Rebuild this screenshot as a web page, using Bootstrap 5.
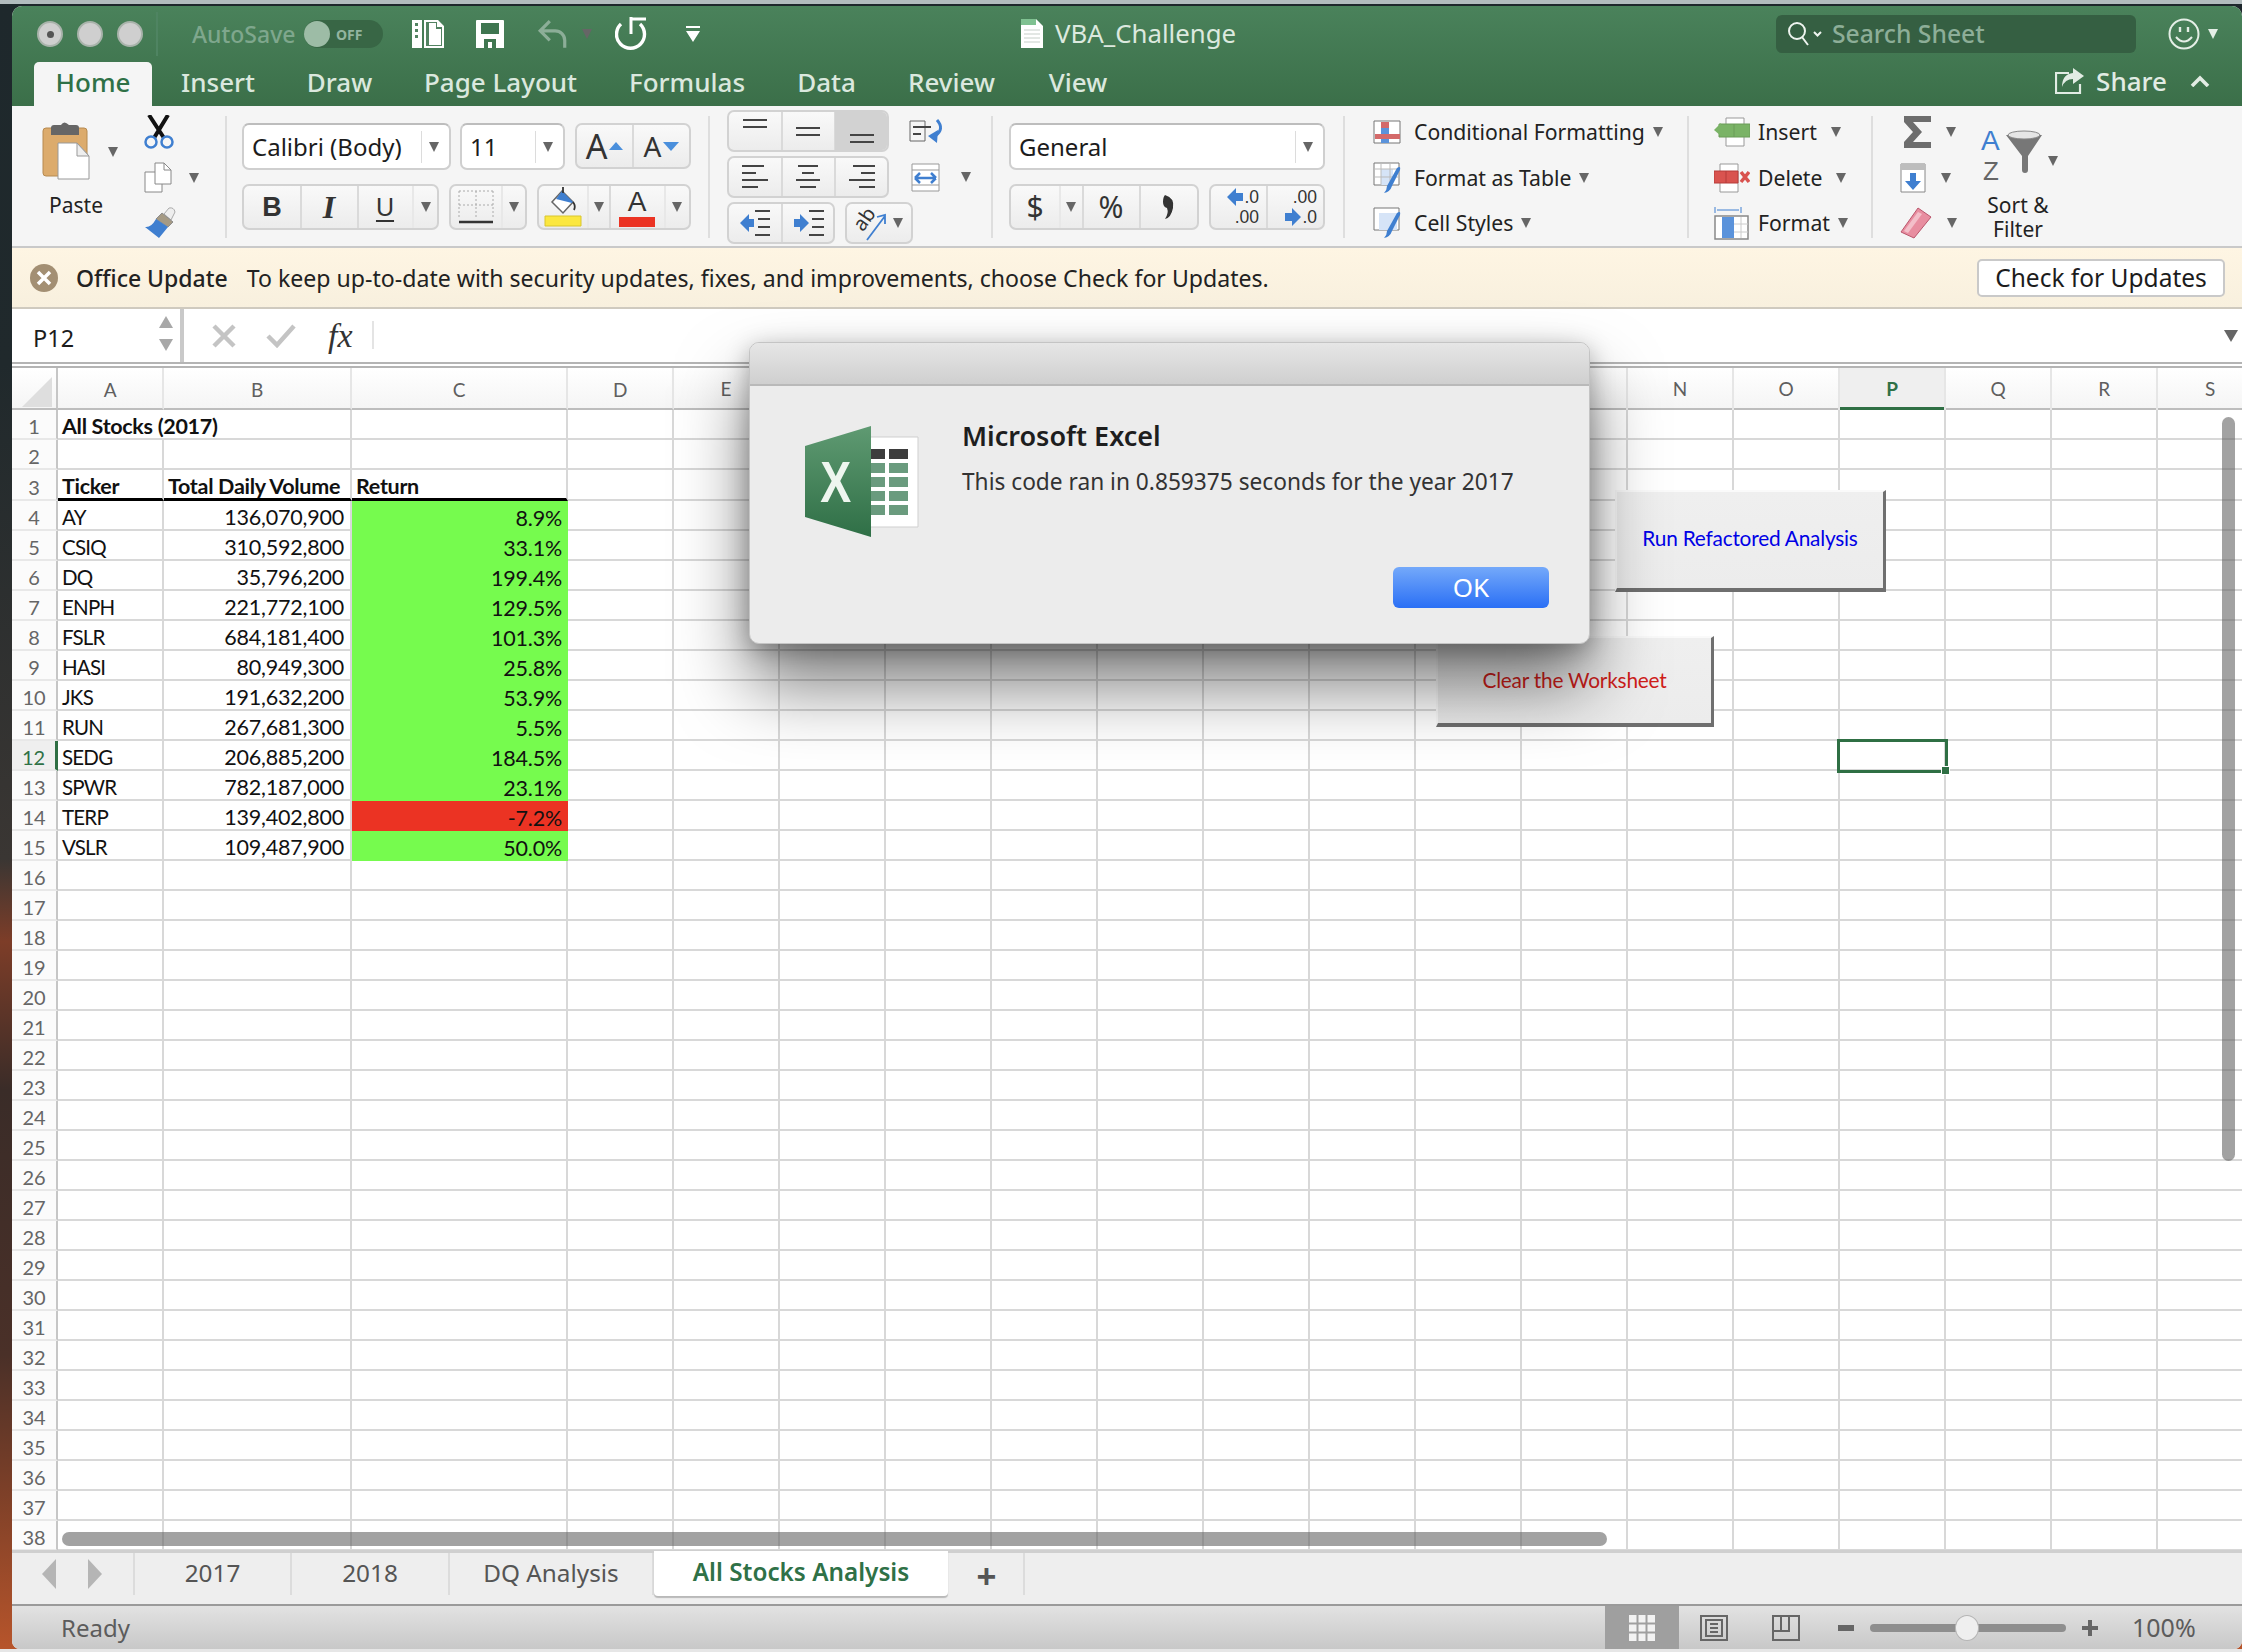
<!DOCTYPE html>
<html lang="en">
<head>
<meta charset="utf-8">
<title>VBA_Challenge</title>
<link rel="stylesheet" href="https://cdn.jsdelivr.net/npm/bootstrap@5.3.0/dist/css/bootstrap.min.css">
<style>
html,body{margin:0;height:1652px;overflow:hidden}
body{background:linear-gradient(180deg,#1e282c 0,#20292c 22%,#3a3633 52%,#7d3d28 57%,#3a2c28 66%,#4a3028 82%,#7b3f28 90%,#b8552b 100%);font-family:"Noto Sans","Liberation Sans",sans-serif;color:#222}
.strip{height:4px;background:#b2bcbe}
.xwin{position:relative;margin:2px 0 0 12px;width:2230px;height:1643px;overflow:hidden;border-radius:10px 10px 8px 8px;background:#fff;display:flex;flex-direction:column}
.bottom-strip{height:3px;background:#e6e6e6}
/* green head */
.head{height:100px;background:linear-gradient(180deg,#4a825b,#3b6f49);flex:none}
.tbar{height:56px;display:flex;align-items:center}
.left-zone{width:1009px;display:flex;align-items:center;padding-left:25px}
.lamp{width:26px;height:26px;border-radius:50%;background:#cfcfcf;border:2px solid #a9b3ab;margin-right:14px;display:flex;align-items:center;justify-content:center}
.lamp i{width:7px;height:7px;background:#555;border-radius:50%}
.tsep{width:2px;height:44px;background:#4f8462;margin:0 34px 0 -1px}
.autosave{font-size:23px;font-weight:500;color:#7fa78d;width:112px}
.tog{width:79px;height:28px;border-radius:14px;background:#386645;display:flex;align-items:center;color:#93b49f;font-size:14px;font-weight:700}
.tog i{width:26px;height:26px;border-radius:50%;background:#9dbca6;margin-right:6px}
.i1{margin-left:29px}.i2{margin-left:32px}.i3{margin-left:33px}.i4{margin-left:13px;border-top-color:#7fa58c}.i5{margin-left:23px}.i6{margin-left:39px}
.title{display:flex;align-items:center;color:#dce9df;font-size:25.8px;gap:12px;width:755px;padding-bottom:2px}
.search{width:360px;height:38px;background:#355f42;border-radius:6px;display:flex;align-items:center;color:#8dae98;font-size:24.7px;font-weight:500;padding-left:12px}
.search span{margin-left:10px}
.smile{margin-left:32px;display:flex;align-items:center;gap:8px}
.smile .cr{border-top-color:#e4eee6}
.ribtabs{height:44px;display:flex;position:relative}
.ribtabs .nav-link{padding:0;text-align:center;color:#dbe8de;font-size:26px;font-weight:500;line-height:40px;height:44px}
.ribtabs .nav-link.active{background:#f5f5f5;color:#2f7147;border-radius:5px 5px 0 0}
.ribtabs .nav-item:nth-child(1){margin-left:22px;width:118px}
.ribtabs .nav-item:nth-child(2){margin-left:3px;width:126px}
.ribtabs .nav-item:nth-child(3){width:117px}
.ribtabs .nav-item:nth-child(4){width:205px}
.ribtabs .nav-item:nth-child(5){width:168px}
.ribtabs .nav-item:nth-child(6){width:111px}
.ribtabs .nav-item:nth-child(7){width:139px}
.ribtabs .nav-item:nth-child(8){width:114px}
.sharebox{margin-left:auto;display:flex;align-items:center;color:#e2ece4;font-size:26px;font-weight:500;height:38px;padding-right:32px;gap:11px}
.sharebox svg:last-child{margin-left:12px}
/* ribbon */
.ribbon{height:140px;background:#f5f5f5;display:flex;flex:none;font-size:21.2px;color:#222}
.rsep{width:2px;height:122px;margin-top:10px;background:#dedede;flex:none}
.cr{display:inline-block;width:0;height:0;border-left:5px solid transparent;border-right:5px solid transparent;border-top:10px solid #666;flex:none}
.g-clip{width:213px;display:flex;padding-left:30px}
.paste-col{width:102px;position:relative;padding-top:14px}
.paste-col .cr{position:absolute;left:66px;top:41px}
.paste-col div{margin:10px 0 0 7px;font-size:21px;line-height:30px}
.r3{padding-top:3px;display:flex;flex-direction:column}
.r3>div{height:46px;display:flex;align-items:center}
.clip-tools .cr{margin-left:17px}
.g-font{width:481px;padding:17px 0 0 15px}
.g-num{width:350px;padding:17px 0 0 16px}
.rowa{display:flex;gap:10px;height:47px;margin-bottom:14px}
.combo{height:47px;background:#fff;border:2px solid #cfcfcf;border-top-color:#bdbdbd;border-radius:7px;display:flex;align-items:center;padding-left:8px;font-size:24px;color:#1c1c1c;position:relative}
.combo .cr{position:absolute;right:10px;top:17px}
.combo::after{content:"";position:absolute;right:27px;top:6px;height:32px;width:1px;background:#dcdcdc}
.c1{width:209px;margin-right:-1px}.c2{width:105px}.c3{width:316px}
.seg{background:linear-gradient(180deg,#f9f9f9,#ececec);border:2px solid #d2d2d2;border-radius:7px;height:46px;display:flex;overflow:hidden}
.seg .btn{padding:0;border:0;border-radius:0;border-right:2px solid #dadada;background:none;color:#333;display:flex;align-items:center;justify-content:center;flex:none;height:100%;font-size:30px;line-height:1}
.seg .btn:last-child{border-right:0}
.w-116{width:116px}.w-197{width:197px}.w-78{width:78px}.w-154{width:154px}.w-190{width:190px}
.bA{font-size:34px!important;gap:2px}
.bA2{font-size:28px!important;gap:2px}
.wg{width:57px}
.w58{width:58px}.w56{width:56px}.w25{width:25px}.w54{width:52px}.w24{width:24px}.w50{width:50px}.w51{width:51px}.w23{width:23px}
.seg .btn.soft{border-right-color:#e8e8e8}
.tri-u{width:0;height:0;border-left:7px solid transparent;border-right:7px solid transparent;border-bottom:8px solid #4a8fdc}
.tri-d{width:0;height:0;border-left:8px solid transparent;border-right:8px solid transparent;border-top:9px solid #4a8fdc}
.bold{font-weight:700;font-family:"Liberation Sans",sans-serif;font-size:27px!important}
.ital{font-style:italic;font-weight:700;font-family:"Liberation Serif",serif;font-size:32px!important}
.undl{font-family:"Liberation Sans",sans-serif;font-size:25px!important;text-decoration:underline;text-underline-offset:4px}
.tcol{flex-direction:column;gap:0;font-family:"Liberation Sans",sans-serif;font-size:28px!important}
.tcol svg{display:block;margin-top:1px}
.dec{flex-direction:column;font-family:"Liberation Sans",sans-serif;font-size:17.5px!important;line-height:20.5px!important;align-items:flex-end!important;padding-right:7px!important}
.dec span{display:flex;align-items:center;height:20.5px}
.dec svg{margin-right:1px}
.g-align{width:281px;padding:4px 0 0 17px}
.rowb{display:flex;height:42px;margin-bottom:4px;align-items:center}
.seg.alg{height:42px;width:162px}
.alg .btn{width:54px}
.alg .btn.on{background:#d2d2d2}
.alg2{width:108px!important}
.seg.orient{width:68px;height:42px;margin-left:10px;gap:4px;align-items:center;padding-left:8px}
.wrapi{margin-left:20px}.mergei{margin-left:22px}.mergei+.cr{margin-left:21px}
.g-styles{width:342px;padding-left:28px}
.g-styles svg{margin-right:13px}
.g-styles .cr{margin-left:8px}
.g-cells{width:182px;padding-left:25px}
.g-cells svg{margin-right:8px}
.g-cells .cr{margin-left:14px}
.g-cells .tight{margin-left:8px}
.g-edit{display:flex;padding-left:27px}
.edit-col{width:81px}
.edit-col .cr{margin-left:15px}
.sumi{margin-left:4px}
.sort-col{text-align:center;width:80px;padding-top:20px;font-size:21px;line-height:24px;position:relative}
.sort-col svg{display:block;margin-bottom:15px;overflow:visible}
.sort-col .cr{position:absolute;left:67px;top:50px}
.sort-lb{margin-left:-2px;width:78px}
.svis{overflow:visible}
/* notice */
.notice{height:63px;flex:none;border-top:2px solid #c9c9c9;border-bottom:2px solid #cfcabf;background:linear-gradient(180deg,#fef5e3,#f8f0de);display:flex;align-items:center;padding-left:18px;font-size:23.1px;color:#222}
.notice b{font-weight:500;margin:0 19px 0 18px;font-size:23px;padding-top:2px}
.notice span{padding-top:2px}
.notice .btn{margin-left:auto;margin-right:17px;width:248px;height:38px;padding:0;background:#fff;border:2px solid #c9c9c9;border-radius:5px;font-size:24.5px;line-height:32px;color:#1c1c1c}
/* formula */
.fbar{height:59px;flex:none;background:#fff;display:flex;border-bottom:6px double #b4b4b4;position:relative}
.namebox{width:172px;border-right:4px solid #c9c9c9;font-size:23.5px;line-height:36px;padding:11px 0 0 21px;position:relative;color:#1c1c1c}
.namebox i{position:absolute;left:147px;width:0;height:0;border-left:7px solid transparent;border-right:7px solid transparent}
.namebox .up{top:7px;border-bottom:12px solid #a8a8a8}.namebox .dn{top:30px;border-top:12px solid #a8a8a8}
.fic{display:flex;align-items:center;padding-left:28px;gap:30px;width:188px}
.fx{font-family:"Liberation Serif",serif;font-style:italic;font-size:34px;color:#333;margin-left:2px;line-height:1}
.fs2{width:2px;height:28px;background:#e4e4e4;margin:12px 0}
.fbar .cr{position:absolute;right:4px;top:21px;border-left-width:7px;border-right-width:7px;border-top-width:12px}
/* sheet */
.sheet{height:1182px;flex:none;overflow:hidden;position:relative;font-family:Lato,"Liberation Sans",sans-serif}
.grid{table-layout:fixed;border-collapse:separate;border-spacing:0;width:2252px;font-size:21.5px;color:#111;letter-spacing:-.2px}
.grid col:nth-child(1){width:46px}.grid col:nth-child(2){width:106px}.grid col:nth-child(3){width:188px}.grid col:nth-child(4){width:216px}.grid col:nth-child(5){width:106px}
.grid th,.grid td{height:30px;padding:4px 5px 0 4px;line-height:24px;border-right:2px solid #d8d8d8;border-bottom:2px solid #d8d8d8;white-space:nowrap;overflow:visible;font-weight:400}
.grid thead th{height:42px;padding:3px 0 0;text-align:center;font-size:19px;color:#5f5f5f;background:linear-gradient(180deg,#fff,#f5f5f5);border-bottom:2px solid #bdbdbd;border-right:2px solid #e6e6e6}
.grid thead .cor{border-right-color:#c6c6c6;position:relative;padding:0}
.grid thead .cor::before{content:"";position:absolute;left:10px;top:9px;border-left:30px solid transparent;border-bottom:30px solid #dedede}
.grid tbody th{text-align:center;padding:4px 0 0;color:#666;font-size:20px;background:#fbfbfb;border-right-color:#c6c6c6;border-bottom-color:#e8e8e8}
.grid .rst{padding:0;border-right:0;background:repeating-linear-gradient(90deg,transparent 0 104px,#d8d8d8 104px 106px)}
.grid thead .hrow{padding:0;background:linear-gradient(180deg,#fff,#f5f5f5);vertical-align:top}
.hletters{display:flex;height:42px;margin-bottom:-2px}
.hletters span{width:106px;flex:none;height:42px;line-height:42px;border-right:2px solid #e6e6e6}
.hletters .pk{background:#efefef;color:#2f7147;box-shadow:inset 0 -3px #2f6f44;font-weight:700}
.grid tbody th.rsel{color:#2f7147;background:#efefef;border-right:3px solid #2f6f44}
.grid tbody td:nth-child(2):not(.hd){font-size:20.5px;letter-spacing:-.8px}
.grid .hd{font-weight:700;letter-spacing:-.3px}
.grid .und{border-bottom:3px solid #000}
.grid .num{text-align:right;padding-right:6px}
.grid .g{background:#76fb4e;border-right:0;border-bottom:0}
.grid .r{background:#eb3323;border-right:0;border-bottom:0}
/* overlays */
.xsb{position:absolute;background:rgba(95,95,95,.58);border-radius:7px}
.hsb{left:50px;top:1526px;width:1545px;height:14px}
.vsb{left:2210px;top:411px;width:13px;height:744px}
.sel{position:absolute;left:1825px;top:733px;width:111px;height:34px;border:3px solid #2f6f44}
.sel::after{content:"";position:absolute;right:-5px;bottom:-5px;width:9px;height:9px;background:#2f6f44;border:1px solid #fff}
.vbtn{position:absolute;display:flex;align-items:center;justify-content:center;background:linear-gradient(180deg,#efefef,#ececec);border:0;border-top:2px solid #fafafa;border-left:2px solid #fafafa;border-right:3px solid #6f6f6f;border-bottom:4px solid #6f6f6f;font-family:Lato,sans-serif;font-size:20.8px;border-radius:0;letter-spacing:-.2px;padding:0 0 4px}
.run{left:1603px;top:484px;width:271px;height:102px;color:#0000e6}
.clr{left:1424px;top:630px;width:278px;height:91px;color:#d0201a;padding-bottom:2px}
.dlg{position:absolute;left:737px;top:336px;width:841px;height:302px;background:#ececec;border:1px solid #c4c4c4;border-radius:10px;box-shadow:0 42px 70px rgba(0,0,0,.5),0 6px 24px rgba(0,0,0,.28);overflow:hidden;display:block}
.dlg .card-header{height:43px;padding:0;background:linear-gradient(180deg,#e6e6e6,#cfcfcf);border-bottom:2px solid #b9b9b9;border-radius:0}
.dlg .card-body{position:relative;display:flex;padding:40px 0 0 55px}
.dlg-t{font-weight:600;font-size:27px;line-height:34px;color:#1e1e1e}
.dlg-m{font-size:22.7px;line-height:30px;color:#333;margin-top:14px}
.dlg-c{margin:-7px 0 0 43px}
.dlg .btn{position:absolute;left:643px;top:181px;width:156px;height:41px;padding:0;border:0;border-radius:6px;background:linear-gradient(180deg,#74a9fa,#2a6ff5);color:#fff;font-size:26px;line-height:41px}
/* sheet tabs */
.stabs{height:54px;flex:none;background:#eeeeee;border-top:3px solid #cfcfcf;display:flex;position:relative}
.stabs .arr{width:123px;border-right:2px solid #dcdcdc;display:flex;align-items:center;gap:32px;padding-left:30px;height:42px}
.stabs .nav-link{padding:0;color:#555;font-size:24.3px;line-height:40px;text-align:center;height:42px;border-right:2px solid #dcdcdc}
.stabs .nav-item:nth-child(1){width:157px}.stabs .nav-item:nth-child(2){width:158px}.stabs .nav-item:nth-child(3){width:204px}
.stabs .nav-link.active{width:294px;height:45px;background:#fff;color:#2f7147;font-weight:600;border:0;border-radius:0 0 4px 4px;box-shadow:0 2px 1px #b9b9b9;margin-top:-2px;line-height:42px}
.stabs .plus{width:77px;height:42px;border-right:2px solid #dcdcdc;font-size:34px;font-weight:700;line-height:46px;color:#555;text-align:center;font-family:"Liberation Sans",sans-serif;padding-left:2px}
/* status */
.sbar{flex:1;border-top:2px solid #9a9a9a;background:linear-gradient(180deg,#e2e2e2,#c8c8c8);display:flex;align-items:center;color:#5c5c5c;font-size:24px;padding-left:49px;position:relative}
.vw{margin-left:auto;width:74px;height:100%;background:#9f9f9f;display:flex;align-items:center;justify-content:center}
.i-p{margin-left:21px}.i-b{margin-left:44px}.i-m{margin-left:38px}
.zslide{width:196px;height:8px;margin-left:16px;border-radius:4px;background:#8e8e8e;position:relative}
.zslide i{position:absolute;left:85px;top:-9px;width:24px;height:26px;border-radius:50%;background:#efefef;border:1px solid #b5b5b5}
.i-z{margin-left:16px}.pct{margin:0 49px 0 34px;font-size:25px;width:61px;white-space:nowrap}
</style>
</head>
<body>
<div class="strip"></div>
<div class="xwin">
  <div class="head">
    <div class="tbar">
      <div class="left-zone">
        <div class="lamp"><i></i></div><div class="lamp"></div><div class="lamp"></div>
        <div class="tsep"></div>
        <div class="autosave">AutoSave</div>
        <div class="tog"><i></i>OFF</div>
        <svg class="i1" width="32" height="28" viewBox="0 0 32 28"><path fill="#fff" d="M0 0h10v28H0zM12 0h14l6 6v22H12z"/><path fill="#3f7650" d="M3 3h3v3H3zM3 9h3v3H3zM3 15h3v3H3zM14 2h11v5h5v19H14z" opacity=".9"/><path fill="#fff" d="M17 3h7v6h5v16H17z"/></svg>
        <svg class="i2" width="28" height="28" viewBox="0 0 28 28"><path fill="#fff" d="M0 1q0-1 1-1h26q1 0 1 1v27H0z"/><path fill="#3f7650" d="M5 3h18v11H5zM8 19h12v9H8z"/><path fill="#fff" d="M12 22h4v6h-4z"/></svg>
        <svg class="i3" width="32" height="32" viewBox="0 0 30 30" fill="none" stroke="#8cae98" stroke-width="3"><path d="M12 3L3 12l9 9M3 12h14a9 9 0 0 1 9 9v7"/></svg>
        <span class="cr i4"></span>
        <svg class="i5" width="32" height="36" viewBox="0 0 32 36" fill="none" stroke="#fff" stroke-width="3.400"><path d="M6 8a14 14 0 1 0 19 0"/><path d="M16 1v17M16 3h15" stroke-width="3"/></svg>
        <svg class="i6" width="14" height="18" viewBox="0 0 14 18"><path fill="#fff" d="M0 1h14v2H0zM0 6h14l-7 11z"/></svg>
      </div>
      <div class="title">
        <svg width="22" height="29" viewBox="0 0 22 29"><path fill="#fff" d="M0 0h15l7 7v22H0z"/><path fill="#7fc191" d="M0 0h15v6H0z"/><path stroke="#c6cfc9" fill="none" d="M3 11h16M3 15h16M3 19h16M3 23h16"/></svg>
        <span>VBA_Challenge</span>
      </div>
      <div class="search">
        <svg width="34" height="24" viewBox="0 0 34 24" fill="none" stroke="#eef4ef" stroke-width="2"><circle cx="9" cy="9" r="8"/><path d="M14 15l6 8M26 10l3.500 3.500L33 10"/></svg>
        <span>Search Sheet</span>
      </div>
      <div class="smile">
        <svg width="32" height="32" viewBox="0 0 32 32" fill="none" stroke="#e4eee6" stroke-width="2"><circle cx="16" cy="16" r="14.500"/><path d="M8 19q8 9 16 0"/><path d="M12 9v5M20 9v5" stroke-width="2.400"/></svg>
        <span class="cr"></span>
      </div>
    </div>
    <div class="ribtabs">
      <ul class="nav">
        <li class="nav-item"><a class="nav-link active" href="#">Home</a></li>
        <li class="nav-item"><a class="nav-link" href="#">Insert</a></li>
        <li class="nav-item"><a class="nav-link" href="#">Draw</a></li>
        <li class="nav-item"><a class="nav-link" href="#">Page Layout</a></li>
        <li class="nav-item"><a class="nav-link" href="#">Formulas</a></li>
        <li class="nav-item"><a class="nav-link" href="#">Data</a></li>
        <li class="nav-item"><a class="nav-link" href="#">Review</a></li>
        <li class="nav-item"><a class="nav-link" href="#">View</a></li>
      </ul>
      <div class="sharebox">
        <svg width="30" height="26" viewBox="0 0 30 26" fill="none" stroke="#e2ece4" stroke-width="2.200"><path d="M14 5H1v20h24v-9"/><path fill="#e2ece4" stroke="none" d="M18 0l11 8-11 8v-5q-8 0-11 8 0-13 11-14z"/></svg>
        <span>Share</span>
        <svg width="20" height="12" viewBox="0 0 20 12" fill="none" stroke="#e2ece4" stroke-width="3.600"><path d="M2 11l8-8 8 8"/></svg>
      </div>
    </div>
  </div>

  <div class="ribbon">
    <div class="g-clip">
      <div class="paste-col">
        <svg width="48" height="60" viewBox="0 0 48 60"><rect x="1" y="8" width="44" height="48" rx="3" fill="#dcab6c" stroke="#b68a50"/><path fill="#666" d="M9 8q0-3 3-3h7q3-5 8 0h7q3 0 3 3v7H9z"/><path fill="#fff" stroke="#999" d="M16 23h19l12 13v23H16z"/><path fill="#eee" stroke="#999" d="M35 23v13h12z"/></svg>
        <span class="cr"></span>
        <div>Paste</div>
      </div>
      <div class="r3 clip-tools">
        <div><svg width="30" height="34" viewBox="0 0 30 34" fill="none"><path d="M5 0l15 23M24 0L10 23" stroke="#111" stroke-width="4"/><circle cx="7" cy="27" r="5.500" stroke="#3f7fd0" stroke-width="2.500"/><circle cx="23" cy="27" r="5.500" stroke="#3f7fd0" stroke-width="2.500"/></svg></div>
        <div><svg width="28" height="31" viewBox="0 0 28 31"><path fill="#fff" stroke="#888" d="M1 10h17v20H1z"/><path fill="#fff" stroke="#888" d="M11 1h9l7 7v14H11z"/><path fill="none" stroke="#888" d="M20 1v7h7"/></svg><span class="cr"></span></div>
        <div><svg width="33" height="32" viewBox="0 0 33 32"><path fill="#eee" stroke="#aaa" d="M25 1q5-1 6 4l-4 8-7-6z"/><path fill="#a59a84" stroke="#8c8c8c" d="M18 6l11 9-5 5L12 12z"/><path fill="#3f7fd0" d="M12 12l12 8-9 11-14-11q6 1 11-8z"/></svg></div>
      </div>
    </div>
    <div class="rsep"></div>
    <div class="g-font">
      <div class="rowa">
        <div class="combo c1">Calibri (Body)<span class="cr"></span></div>
        <div class="combo c2">11<span class="cr"></span></div>
        <div class="seg btn-group w-116">
          <button class="btn bA wg">A<span class="tri-u"></span></button>
          <button class="btn bA2 wg">A<span class="tri-d"></span></button>
        </div>
      </div>
      <div class="rowa">
        <div class="seg btn-group w-197">
          <button class="btn w58 bold">B</button>
          <button class="btn w58 ital">I</button>
          <button class="btn w56 undl soft">U</button>
          <button class="btn w25"><span class="cr"></span></button>
        </div>
        <div class="seg btn-group w-78">
          <button class="btn w54 soft"><svg width="36" height="36" viewBox="0 0 36 36" fill="none"><path d="M1 2h34M1 16h34M1 2v28M18 2v28M35 2v28" stroke="#aaa" stroke-dasharray="2 2"/><path d="M1 33h34" stroke="#333" stroke-width="2.500"/></svg></button>
          <button class="btn w24"><span class="cr"></span></button>
        </div>
        <div class="seg btn-group w-154">
          <button class="btn w50 soft"><svg width="38" height="40" viewBox="0 0 38 40"><path fill="#fff" stroke="#666" stroke-width="1.500" d="M18 4l11 11-10 11L8 15z"/><path fill="#3f7fd0" d="M12 12l6-8 11 11-1 1z"/><path d="M19 6V0M29 15q3 4 1 8" stroke="#333" stroke-width="1.800" fill="none"/><path fill="#fbe73f" stroke="#d9c62e" d="M1 29h36v10H1z"/></svg></button>
          <button class="btn w23"><span class="cr"></span></button>
          <button class="btn w56 tcol soft">A<svg width="36" height="10" viewBox="0 0 36 10"><path fill="#eb3323" d="M0 0h36v10H0z"/></svg></button>
          <button class="btn w23"><span class="cr"></span></button>
        </div>
      </div>
    </div>
    <div class="rsep"></div>
    <div class="g-align">
      <div class="rowb">
        <div class="seg btn-group alg">
          <button class="btn"><svg width="24" height="24" viewBox="0 0 24 24" stroke="#444" stroke-width="2"><path d="M0 1h24M0 8h24"/></svg></button>
          <button class="btn"><svg width="24" height="24" viewBox="0 0 24 24" stroke="#444" stroke-width="2"><path d="M0 9h24M0 16h24"/></svg></button>
          <button class="btn on"><svg width="24" height="24" viewBox="0 0 24 24" stroke="#444" stroke-width="2"><path d="M0 16h24M0 23h24"/></svg></button>
        </div>
        <svg class="wrapi" width="36" height="24" viewBox="0 0 36 24" fill="none"><path stroke="#666" d="M1 2h15v20H1z"/><path stroke="#444" stroke-width="2" d="M4 8h18M4 15h8"/><path stroke="#3f7fd0" stroke-width="3" d="M28 1q8 9-2 16"/><path fill="#3f7fd0" d="M29 11l-1 13-9-7z"/></svg>
      </div>
      <div class="rowb">
        <div class="seg btn-group alg">
          <button class="btn"><svg width="26" height="26" viewBox="0 0 26 26" stroke="#444" stroke-width="2"><path d="M0 2h22M0 9h14M0 16h26M0 23h16"/></svg></button>
          <button class="btn"><svg width="26" height="26" viewBox="0 0 26 26" stroke="#444" stroke-width="2"><path d="M3 2h20M7 9h12M1 16h24M5 23h16"/></svg></button>
          <button class="btn"><svg width="26" height="26" viewBox="0 0 26 26" stroke="#444" stroke-width="2"><path d="M4 2h22M12 9h14M0 16h26M10 23h16"/></svg></button>
        </div>
        <svg class="mergei" width="29" height="29" viewBox="0 0 29 29" fill="#fff"><path stroke="#999" d="M1 1h27v27H1z"/><path stroke="#999" d="M1 7h27M1 22h27"/><path fill="none" stroke="#3f7fd0" stroke-width="2.500" d="M4 15h21M4 15l5-5M4 15l5 5M25 15l-5-5M25 15l-5 5"/></svg>
        <span class="cr"></span>
      </div>
      <div class="rowb">
        <div class="seg btn-group alg alg2">
          <button class="btn"><svg width="30" height="28" viewBox="0 0 30 28"><path fill="#3f7fd0" d="M0 14l9-9v5h5v8H9v5z"/><path stroke="#444" stroke-width="2" d="M15 2h15M18 10h12M18 18h12M15 26h15"/></svg></button>
          <button class="btn"><svg width="30" height="28" viewBox="0 0 30 28"><path fill="#3f7fd0" d="M15 14L6 5v5H0v8h6v5z"/><path stroke="#444" stroke-width="2" d="M15 2h15M18 10h12M18 18h12M15 26h15"/></svg></button>
        </div>
        <div class="seg btn-group orient">
          <svg class="svis" width="34" height="38" viewBox="0 0 34 38"><text x="1" y="25" transform="rotate(-55 8 20)" font-family="Noto Sans,sans-serif" font-size="20" fill="#333">ab</text><path fill="none" stroke="#3f7fd0" stroke-width="1.800" d="M12 36L30 12M22 13l8-2v9"/></svg>
          <span class="cr"></span>
        </div>
      </div>
    </div>
    <div class="rsep"></div>
    <div class="g-num">
      <div class="rowa">
        <div class="combo c3">General<span class="cr"></span></div>
      </div>
      <div class="rowa">
        <div class="seg btn-group w-190">
          <button class="btn w50 soft">$</button>
          <button class="btn w24"><span class="cr"></span></button>
          <button class="btn w58">%</button>
          <button class="btn w58"><svg width="14" height="30" viewBox="0 0 14 30"><path fill="#333" d="M3 3q10 3 8 13T3 27q4-6 2-11-4-1-4-6t2-7z"/></svg></button>
        </div>
        <div class="seg btn-group w-116">
          <button class="btn wg dec"><span><svg width="16" height="18" viewBox="0 0 16 18"><path fill="#3f7fd0" d="M0 9l9-9v5h7v8H9v5z"/></svg>.0</span><span>.00</span></button>
          <button class="btn wg dec"><span>.00</span><span><svg width="16" height="18" viewBox="0 0 16 18"><path fill="#3f7fd0" d="M16 9L7 0v5H0v8h7v5z"/></svg>.0</span></button>
        </div>
      </div>
    </div>
    <div class="rsep"></div>
    <div class="g-styles r3">
      <div><svg width="28" height="24" viewBox="0 0 28 24"><path fill="#fff" stroke="#777" d="M1 1h26v22H1z"/><path fill="#d46a6a" d="M2 14h25v5H2zM8 2h8v6H8z"/><path fill="#5b93db" d="M8 8h8v6H8zM8 19h8v4H8z"/></svg>Conditional Formatting<span class="cr"></span></div>
      <div><svg width="28" height="32" viewBox="0 0 28 32"><path fill="#fff" stroke="#777" d="M1 1h25v22H1z"/><path fill="#d6e4f7" d="M8 7h12v16H8z"/><path stroke="#bbb" d="M1 7h25M1 15h25M8 1v22M17 1v22"/><path fill="#3f7fd0" d="M24 6q4-3 3 2L19 24q-2 6-8 7 3-3 3-7z"/></svg>Format as Table<span class="cr"></span></div>
      <div><svg width="28" height="32" viewBox="0 0 28 32"><path fill="#fff" stroke="#777" d="M1 1h25v22H1z"/><path fill="#d6e4f7" d="M6 6h18v17H6z"/><path fill="#3f7fd0" d="M24 6q4-3 3 2L19 24q-2 6-8 7 3-3 3-7z"/></svg>Cell Styles<span class="cr"></span></div>
    </div>
    <div class="rsep"></div>
    <div class="g-cells r3">
      <div><svg width="36" height="30" viewBox="0 0 36 30"><path fill="#fff" stroke="#999" d="M12 1h18v28H12z"/><path fill="#7ab366" stroke="#6a9c59" d="M5 7h31v13H5z"/><path stroke="#6a9c59" d="M20 7v13"/><path fill="#7ab366" d="M0 13l7-7v13z"/></svg>Insert<span class="cr"></span></div>
      <div><svg width="36" height="30" viewBox="0 0 36 30"><path fill="#fff" stroke="#999" d="M6 1h18v28H6z"/><path fill="#d9534f" stroke="#b53d3a" d="M0 8h24v12H0z"/><path stroke="#b53d3a" d="M12 8v12"/><path stroke="#d9534f" stroke-width="3.500" d="M27 9l8 10M35 9l-8 10"/></svg>Delete<span class="cr"></span></div>
      <div><svg width="36" height="34" viewBox="0 0 36 34"><path fill="#3f7fd0" stroke="#3f7fd0" d="M1 1v6M27 1v6M3 4h22"/><path fill="#fff" stroke="#888" stroke-width="1.500" d="M1 10h33v23H1z"/><path fill="#5b93db" d="M8 11h12v21H8z"/><path stroke="#ccc" d="M20 18h14M20 26h14M27 11v21"/></svg>Format<span class="cr tight"></span></div>
    </div>
    <div class="rsep"></div>
    <div class="g-edit">
      <div class="r3 edit-col">
        <div><svg class="sumi" width="27" height="32" viewBox="0 0 27 32"><path fill="#6d6d6d" d="M0 0h27v6H9l9 10-9 10h18v6H0v-6l9-10L0 6z"/></svg><span class="cr"></span></div>
        <div><svg width="26" height="30" viewBox="0 0 26 30"><path fill="#fff" stroke="#888" d="M1 1h24v28H1z"/><path fill="#bdbdbd" d="M1 1h24v6H1z"/><path fill="#3f7fd0" d="M10 10h6v8h5l-8 9-8-9h5z"/></svg><span class="cr"></span></div>
        <div><svg width="32" height="32" viewBox="0 0 32 32"><path fill="#e88ea0" stroke="#b9566c" d="M18 1l13 9L14 31 1 25z"/><path fill="#f3bfc9" d="M4 24L18 5l4 2L8 26z"/></svg><span class="cr"></span></div>
      </div>
      <div class="sort-col">
        <svg width="62" height="52" viewBox="0 0 62 52"><text x="0" y="24" font-family="Liberation Sans,sans-serif" font-size="28" fill="#3f7fd0">A</text><text x="2" y="54" font-family="Liberation Sans,sans-serif" font-size="26" fill="#666">Z</text><path fill="#777" d="M25 9h36L47 30v14q0 3-3 3t-3-3V30z"/><ellipse cx="43" cy="9" rx="16" ry="4" fill="#e6e6e6" stroke="#888"/></svg>
        <span class="cr"></span>
        <div class="sort-lb">Sort &amp;<br>Filter</div>
      </div>
    </div>
  </div>

  <div class="notice">
    <svg width="28" height="28" viewBox="0 0 28 28"><circle cx="14" cy="14" r="14" fill="#a38f73"/><path stroke="#fff" stroke-width="3.500" d="M8 8l12 12M20 8L8 20"/></svg>
    <b>Office Update</b><span>To keep up-to-date with security updates, fixes, and improvements, choose Check for Updates.</span>
    <button class="btn">Check for Updates</button>
  </div>

  <div class="fbar">
    <div class="namebox">P12<i class="up"></i><i class="dn"></i></div>
    <div class="fic">
      <svg width="24" height="24" viewBox="0 0 24 24" stroke="#c4c4c4" stroke-width="4.500"><path d="M2 2l20 20M22 2L2 22"/></svg>
      <svg width="30" height="24" viewBox="0 0 30 24" fill="none" stroke="#c4c4c4" stroke-width="4.500"><path d="M2 12l9 9L28 2"/></svg>
      <span class="fx">fx</span>
    </div>
    <div class="fs2"></div>
    <span class="cr"></span>
  </div>

  <div class="sheet">
    <table class="grid">
      <colgroup><col><col><col><col><col><col></colgroup>
      <thead><tr><th class="cor"></th><th>A</th><th>B</th><th>C</th><th>D</th>
      <th class="rst hrow"><div class="hletters"><span>E</span><span>F</span><span>G</span><span>H</span><span>I</span><span>J</span><span>K</span><span>L</span><span>M</span><span>N</span><span>O</span><span class="pk">P</span><span>Q</span><span>R</span><span>S</span></div></th></tr></thead>
      <tbody>
      <tr><th>1</th><td colspan="2" class="hd">All Stocks (2017)</td><td></td><td></td><td class="rst"></td></tr>
      <tr><th>2</th><td></td><td></td><td></td><td></td><td class="rst"></td></tr>
      <tr><th>3</th><td class="hd und">Ticker</td><td class="hd und">Total Daily Volume</td><td class="hd und">Return</td><td></td><td class="rst"></td></tr>
      <tr><th>4</th><td>AY</td><td class="num">136,070,900</td><td class="num g">8.9%</td><td></td><td class="rst"></td></tr>
      <tr><th>5</th><td>CSIQ</td><td class="num">310,592,800</td><td class="num g">33.1%</td><td></td><td class="rst"></td></tr>
      <tr><th>6</th><td>DQ</td><td class="num">35,796,200</td><td class="num g">199.4%</td><td></td><td class="rst"></td></tr>
      <tr><th>7</th><td>ENPH</td><td class="num">221,772,100</td><td class="num g">129.5%</td><td></td><td class="rst"></td></tr>
      <tr><th>8</th><td>FSLR</td><td class="num">684,181,400</td><td class="num g">101.3%</td><td></td><td class="rst"></td></tr>
      <tr><th>9</th><td>HASI</td><td class="num">80,949,300</td><td class="num g">25.8%</td><td></td><td class="rst"></td></tr>
      <tr><th>10</th><td>JKS</td><td class="num">191,632,200</td><td class="num g">53.9%</td><td></td><td class="rst"></td></tr>
      <tr><th>11</th><td>RUN</td><td class="num">267,681,300</td><td class="num g">5.5%</td><td></td><td class="rst"></td></tr>
      <tr><th class="rsel">12</th><td>SEDG</td><td class="num">206,885,200</td><td class="num g">184.5%</td><td></td><td class="rst"></td></tr>
      <tr><th>13</th><td>SPWR</td><td class="num">782,187,000</td><td class="num g">23.1%</td><td></td><td class="rst"></td></tr>
      <tr><th>14</th><td>TERP</td><td class="num">139,402,800</td><td class="num r">-7.2%</td><td></td><td class="rst"></td></tr>
      <tr><th>15</th><td>VSLR</td><td class="num">109,487,900</td><td class="num g">50.0%</td><td></td><td class="rst"></td></tr>
      <tr><th>16</th><td></td><td></td><td></td><td></td><td class="rst"></td></tr>
      <tr><th>17</th><td></td><td></td><td></td><td></td><td class="rst"></td></tr>
      <tr><th>18</th><td></td><td></td><td></td><td></td><td class="rst"></td></tr>
      <tr><th>19</th><td></td><td></td><td></td><td></td><td class="rst"></td></tr>
      <tr><th>20</th><td></td><td></td><td></td><td></td><td class="rst"></td></tr>
      <tr><th>21</th><td></td><td></td><td></td><td></td><td class="rst"></td></tr>
      <tr><th>22</th><td></td><td></td><td></td><td></td><td class="rst"></td></tr>
      <tr><th>23</th><td></td><td></td><td></td><td></td><td class="rst"></td></tr>
      <tr><th>24</th><td></td><td></td><td></td><td></td><td class="rst"></td></tr>
      <tr><th>25</th><td></td><td></td><td></td><td></td><td class="rst"></td></tr>
      <tr><th>26</th><td></td><td></td><td></td><td></td><td class="rst"></td></tr>
      <tr><th>27</th><td></td><td></td><td></td><td></td><td class="rst"></td></tr>
      <tr><th>28</th><td></td><td></td><td></td><td></td><td class="rst"></td></tr>
      <tr><th>29</th><td></td><td></td><td></td><td></td><td class="rst"></td></tr>
      <tr><th>30</th><td></td><td></td><td></td><td></td><td class="rst"></td></tr>
      <tr><th>31</th><td></td><td></td><td></td><td></td><td class="rst"></td></tr>
      <tr><th>32</th><td></td><td></td><td></td><td></td><td class="rst"></td></tr>
      <tr><th>33</th><td></td><td></td><td></td><td></td><td class="rst"></td></tr>
      <tr><th>34</th><td></td><td></td><td></td><td></td><td class="rst"></td></tr>
      <tr><th>35</th><td></td><td></td><td></td><td></td><td class="rst"></td></tr>
      <tr><th>36</th><td></td><td></td><td></td><td></td><td class="rst"></td></tr>
      <tr><th>37</th><td></td><td></td><td></td><td></td><td class="rst"></td></tr>
      <tr><th>38</th><td></td><td></td><td></td><td></td><td class="rst"></td></tr>
      </tbody>
    </table>
  </div>

  <div class="stabs">
    <div class="arr">
      <svg width="14" height="30" viewBox="0 0 14 30"><path fill="#b5b5b5" d="M14 0v30L0 15z"/></svg>
      <svg width="14" height="30" viewBox="0 0 14 30"><path fill="#b5b5b5" d="M0 0v30l14-15z"/></svg>
    </div>
    <ul class="nav">
      <li class="nav-item"><a class="nav-link" href="#">2017</a></li>
      <li class="nav-item"><a class="nav-link" href="#">2018</a></li>
      <li class="nav-item"><a class="nav-link" href="#">DQ Analysis</a></li>
      <li class="nav-item"><a class="nav-link active" href="#">All Stocks Analysis</a></li>
    </ul>
    <div class="plus">+</div>
  </div>

  <div class="sbar">
    <span>Ready</span>
    <div class="vw"><svg width="26" height="26" viewBox="0 0 26 26" fill="#f2f2f2"><path d="M0 0h26v26H0z"/><path stroke="#9f9f9f" stroke-width="2" d="M8.500 0v26M17.500 0v26M0 8.500h26M0 17.500h26"/></svg></div>
    <svg class="i-p" width="28" height="26" viewBox="0 0 28 26" fill="none" stroke="#666" stroke-width="2"><path d="M1 1h26v24H1z"/><path d="M6 5h16v16H6z"/><path d="M10 9h8M10 13h8M10 17h8"/></svg>
    <svg class="i-b" width="28" height="26" viewBox="0 0 28 26" fill="none" stroke="#666" stroke-width="2"><path d="M1 1h26v24H1z"/><path d="M1 16h16V1M9 1v15"/></svg>
    <svg class="i-m" width="16" height="6" viewBox="0 0 16 6"><path fill="#666" d="M0 0h16v6H0z"/></svg>
    <div class="zslide"><i></i></div>
    <svg class="i-z" width="16" height="16" viewBox="0 0 16 16"><path fill="#666" d="M0 6h16v4H0zM6 0h4v16H6z"/></svg>
    <span class="pct">100%</span>
  </div>

  <div class="xsb hsb"></div>
  <div class="xsb vsb"></div>
  <div class="sel"></div>
  <button class="btn vbtn run">Run Refactored Analysis</button>
  <button class="btn vbtn clr">Clear the Worksheet</button>
  <div class="card dlg">
    <div class="card-header"></div>
    <div class="card-body">
      <svg width="114" height="124" viewBox="0 0 114 124">
        <defs><linearGradient id="gx" x1="0" y1="0" x2="0" y2="1"><stop offset="0" stop-color="#5f9a72"/><stop offset="1" stop-color="#2f6f46"/></linearGradient></defs>
        <path fill="#fff" stroke="#cfcfcf" d="M60 11h53v90H60z"/>
        <path fill="#3d3d3d" d="M66 23h14v10H66zM84 23h19v10H84z"/>
        <path fill="#6a9b7e" d="M66 37h14v10H66zM84 37h19v10H84zM66 51h14v10H66zM84 51h19v10H84zM66 65h14v10H66zM84 65h19v10H84zM66 79h14v10H66zM84 79h19v10H84z"/>
        <path fill="url(#gx)" d="M0 20L66 0v111L0 91z"/>
        <text x="31" y="76" text-anchor="middle" font-family="Liberation Sans,sans-serif" font-size="58" font-weight="700" fill="#eef6ef" transform="translate(6 0) scale(.8 1)">X</text>
      </svg>
      <div class="dlg-c">
        <div class="dlg-t">Microsoft Excel</div>
        <div class="dlg-m">This code ran in 0.859375 seconds for the year 2017</div>
      </div>
      <button class="btn">OK</button>
    </div>
  </div>
</div>
<div class="bottom-strip"></div>
</body>
</html>
